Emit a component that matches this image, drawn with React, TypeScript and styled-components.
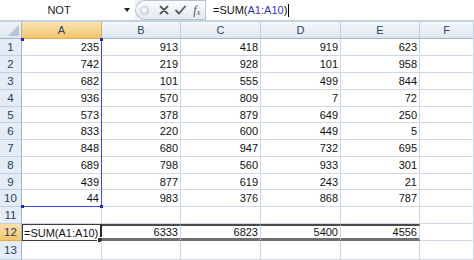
import React from "react";
import styled, { createGlobalStyle, css } from "styled-components";

const Global = createGlobalStyle`
  html, body { margin: 0; padding: 0; background: #ffffff; overflow: hidden; }
  body { font-family: "Liberation Sans", Arial, sans-serif; }
`;

const Page = styled.div`
  width: 474px;
  height: 260px;
  overflow: hidden;
  display: flex;
  flex-direction: column;
  background: #ffffff;
`;

const FormulaBar = styled.div`
  height: 20px;
  flex: none;
  display: flex;
  align-items: stretch;
  background: #eef2f7;
  border-bottom: 1px solid #c4cfdc;
`;

const NameBox = styled.div`
  width: 118px;
  display: flex;
  align-items: center;
  justify-content: center;
  background: #ffffff;
  font-size: 11px;
  color: #1a1a1a;
`;

const DropArrow = styled.div`
  width: 17px;
  display: flex;
  align-items: center;
  justify-content: center;
  background: #ffffff;
  &::after {
    content: "";
    border-left: 3px solid transparent;
    border-right: 3px solid transparent;
    border-top: 4px solid #222;
  }
`;

const Pill = styled.div`
  width: 70px;
  display: flex;
  align-items: center;
  gap: 0;
  border: 1px solid #b7c3d2;
  border-right: none;
  border-radius: 10px 0 0 10px;
  background: linear-gradient(#fbfcfd, #e3e8ef);
  padding-left: 4px;
  box-sizing: border-box;
`;

const Grip = styled.div`
  width: 9px;
  height: 9px;
  border-radius: 50%;
  background: radial-gradient(circle at 40% 35%, #ffffff, #c9d2dc);
  border: 1px solid #c2cbd6;
  box-sizing: border-box;
  margin-right: 7px;
`;

const IconSlot = styled.div`
  width: 17px;
  display: flex;
  align-items: center;
  justify-content: center;
`;

const Fx = styled.span`
  font-family: "Liberation Serif", "Times New Roman", serif;
  font-style: italic;
  font-size: 12px;
  color: #555;
  & > sub {
    font-size: 8px;
    vertical-align: -1px;
  }
`;

const FormulaInput = styled.div`
  flex: 1;
  display: flex;
  align-items: center;
  padding-left: 7px;
  background: #ffffff;
  border-left: 1px solid #b7c3d2;
  font-size: 11px;
  color: #111;
`;

const Ref = styled.span`
  color: #3333cc;
`;

const Caret = styled.span`
  display: inline-block;
  width: 1px;
  height: 13px;
  background: #000;
  margin-left: 1px;
`;

const SheetWrap = styled.div`
  position: relative;
  flex: 1;
`;

const Grid = styled.div`
  display: grid;
  grid-template-columns: 22px 80px 79px 80px 80px 79px 1fr;
  grid-template-rows: 18px 17px 17px 17px 17px 16px 17px 17px 17px 16px 17px 17px 17px 19px;
  font-size: 11px;
`;

const headerBase = css`
  box-sizing: border-box;
  display: flex;
  align-items: center;
  justify-content: center;
  color: #27415f;
  border-right: 1px solid #9eb6ce;
  border-bottom: 1px solid #9eb6ce;
`;

const ColHead = styled.div<{ $sel?: boolean }>`
  ${headerBase}
  border-top: 1px solid #c7d3e1;
  background: ${(p) =>
    p.$sel
      ? "linear-gradient(#fbe3b2, #f3c66e)"
      : "linear-gradient(#f4f7fb, #dfe6ef)"};
  border-right-color: ${(p) => (p.$sel ? "#e2a94c" : "#c2cfdd")};
  border-bottom-color: ${(p) => (p.$sel ? "#e2a94c" : "#9eb6ce")};
`;

const Corner = styled.div`
  ${headerBase}
  border-top: 1px solid #c7d3e1;
  background: linear-gradient(#eef2f8, #dfe6ef);
  justify-content: flex-end;
  align-items: flex-end;
  padding: 0 2px 2px 0;
`;

const RowHead = styled.div<{ $sel?: boolean }>`
  ${headerBase}
  background: ${(p) => (p.$sel ? "linear-gradient(#fbe0a8, #f3c66e)" : "#e4ecf7")};
  border-bottom-color: ${(p) => (p.$sel ? "#e2a94c" : "#c2cfdd")};
  border-right-color: #9eb6ce;
  font-size: 11.5px;
`;

const Cell = styled.div<{ $left?: boolean; $total?: boolean; $active?: boolean }>`
  box-sizing: border-box;
  display: flex;
  align-items: center;
  justify-content: ${(p) => (p.$left ? "flex-start" : "flex-end")};
  padding: 0 2px 0 2px;
  border-right: 1px solid #d0d7e5;
  border-bottom: 1px solid #d0d7e5;
  color: #111;
  white-space: nowrap;
  position: relative;
  ${(p) =>
    p.$total &&
    css`
      border-top: 2px solid #4a4a4a;
      border-bottom: 3px solid #707070;
    `}
  ${(p) =>
    p.$active &&
    css`
      border: 1px solid #3a3a3a;
      border-right: 2px solid #2a2a2a;
      padding-left: 1px;
    `}
`;

const FillHandle = styled.span`
  position: absolute;
  right: -3px;
  bottom: -3px;
  width: 4px;
  height: 4px;
  background: #333;
  border: 1px solid #fff;
`;

const RangeBox = styled.div`
  position: absolute;
  left: 22px;
  top: 18px;
  width: 80px;
  height: 168px;
  box-sizing: border-box;
  border-right: 1px solid #4646d8;
  border-bottom: 1px solid #4646d8;
  pointer-events: none;
`;

const Knob = styled.span<{ $x: "l" | "r"; $y: "t" | "b" }>`
  position: absolute;
  width: 3px;
  height: 3px;
  background: #2424c8;
  ${(p) => (p.$x === "l" ? "left: -1px;" : "right: -2px;")}
  ${(p) => (p.$y === "t" ? "top: -1px;" : "bottom: -2px;")}
`;

const data: number[][] = [
  [235, 913, 418, 919, 623],
  [742, 219, 928, 101, 958],
  [682, 101, 555, 499, 844],
  [936, 570, 809, 7, 72],
  [573, 378, 879, 649, 250],
  [833, 220, 600, 449, 5],
  [848, 680, 947, 732, 695],
  [689, 798, 560, 933, 301],
  [439, 877, 619, 243, 21],
  [44, 983, 376, 868, 787],
];

const totals = [6333, 6823, 5400, 4556];
const letters = ["A", "B", "C", "D", "E", "F"];

const XIcon = () => (
  <svg width="10" height="10" viewBox="0 0 10 10">
    <path d="M1.5 1.5 L8.5 8.5 M8.5 1.5 L1.5 8.5" stroke="#5a5a5a" strokeWidth="1.8" strokeLinecap="round" />
  </svg>
);

const CheckIcon = () => (
  <svg width="11" height="10" viewBox="0 0 11 10">
    <path d="M1 5.5 L4 8.5 L10 1.5" stroke="#5a5a5a" strokeWidth="1.8" fill="none" strokeLinecap="round" strokeLinejoin="round" />
  </svg>
);

const CornerTri = () => (
  <svg width="11" height="11" viewBox="0 0 11 11">
    <polygon points="11,0 11,11 0,11" fill="#b4c3d6" />
  </svg>
);

export default function App() {
  return (
    <Page>
      <Global />
      <FormulaBar>
        <NameBox>NOT</NameBox>
        <DropArrow />
        <Pill>
          <Grip />
          <IconSlot>
            <XIcon />
          </IconSlot>
          <IconSlot>
            <CheckIcon />
          </IconSlot>
          <IconSlot>
            <Fx>
              f<sub>x</sub>
            </Fx>
          </IconSlot>
        </Pill>
        <FormulaInput>
          =SUM(<Ref>A1:A10</Ref>)<Caret />
        </FormulaInput>
      </FormulaBar>
      <SheetWrap>
        <Grid>
          <Corner>
            <CornerTri />
          </Corner>
          {letters.map((l) => (
            <ColHead key={l} $sel={l === "A"}>
              {l}
            </ColHead>
          ))}
          {data.map((row, i) => (
            <React.Fragment key={i}>
              <RowHead>{i + 1}</RowHead>
              {row.map((v, j) => (
                <Cell key={j}>{v}</Cell>
              ))}
              <Cell />
            </React.Fragment>
          ))}
          <RowHead>11</RowHead>
          {letters.map((l) => (
            <Cell key={l} />
          ))}
          <RowHead $sel>12</RowHead>
          <Cell $left $active>
            =SUM(A1:A10)
            <FillHandle />
          </Cell>
          {totals.map((t, j) => (
            <Cell key={j} $total>
              {t}
            </Cell>
          ))}
          <Cell />
          <RowHead>13</RowHead>
          {letters.map((l) => (
            <Cell key={l} />
          ))}
        </Grid>
        <RangeBox>
          <Knob $x="l" $y="t" />
          <Knob $x="r" $y="t" />
          <Knob $x="l" $y="b" />
          <Knob $x="r" $y="b" />
        </RangeBox>
      </SheetWrap>
    </Page>
  );
}
